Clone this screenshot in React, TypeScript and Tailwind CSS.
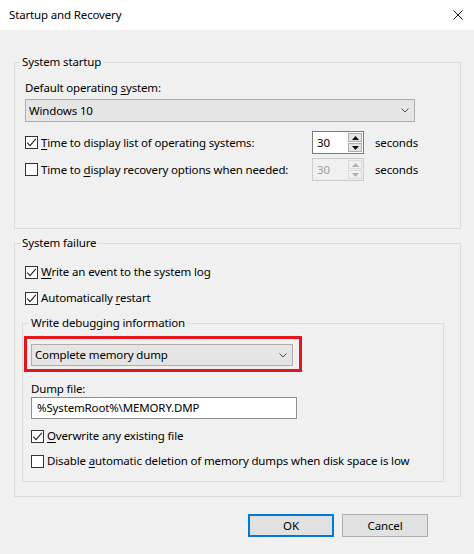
import React from "react";

function Check({ checked }: { checked?: boolean }) {
  return (
    <span className="w-[13px] h-[13px] border border-[#333333] bg-white flex items-center justify-center shrink-0">
      {checked && (
        <svg width="11" height="11" viewBox="0 0 11 11">
          <path d="M1.2 5.6 L4 8.6 L9.8 1.8" fill="none" stroke="#222" strokeWidth="1.1" />
        </svg>
      )}
    </span>
  );
}

function Chevron() {
  return (
    <svg width="8" height="5" viewBox="0 0 8 5" className="shrink-0">
      <path d="M0.5 0.5 L4 4 L7.5 0.5" fill="none" stroke="#505050" strokeWidth="1" />
    </svg>
  );
}

function Spinner({ disabled }: { disabled?: boolean }) {
  const tri = disabled ? "#b0b0b0" : "#111";
  return (
    <div
      className={
        "w-[52px] h-[23px] border flex " +
        (disabled ? "border-[#cccccc] bg-[#f0f0f0]" : "border-[#7a7a7a] bg-white")
      }
    >
      <div className={"flex-1 pl-[4px] flex items-center " + (disabled ? "text-[#a0a0a0]" : "")}>30</div>
      <div className="w-[16px] flex flex-col gap-[1px] p-[1px]">
        <div className={"flex-1 flex items-center justify-center border " + (disabled ? "border-[#dadada] bg-[#f0f0f0]" : "border-[#adadad] bg-[#e5e5e5]")}>
          <svg width="7" height="4" viewBox="0 0 7 4">
            <path d="M0 4 L3.5 0 L7 4 Z" fill={tri} />
          </svg>
        </div>
        <div className={"flex-1 flex items-center justify-center border " + (disabled ? "border-[#dadada] bg-[#f0f0f0]" : "border-[#adadad] bg-[#e5e5e5]")}>
          <svg width="7" height="4" viewBox="0 0 7 4">
            <path d="M0 0 L7 0 L3.5 4 Z" fill={tri} />
          </svg>
        </div>
      </div>
    </div>
  );
}

export default function App() {
  return (
    <div className="w-[474px] h-[554px] bg-[#f0f0f0] flex flex-col text-[11.5px] tracking-[-0.15px] leading-[16px] text-black font-['Noto_Sans',sans-serif] overflow-hidden">
      {/* Title bar */}
      <div className="h-[30px] bg-white flex items-center justify-between pl-[9px] pr-[11px] shrink-0">
        <span>Startup and Recovery</span>
        <svg width="10" height="10" viewBox="0 0 10 10">
          <path d="M0.5 0.5 L9.5 9.5 M9.5 0.5 L0.5 9.5" stroke="#111" strokeWidth="1" />
        </svg>
      </div>

      <div className="flex flex-col pl-[14px]">
        {/* System startup */}
        <div className="mt-[32px] w-[447px] border border-[#dcdcdc] flex flex-col pb-[47px]">
          <div className="-mt-[9px] ml-[5px] px-[2px] w-fit bg-[#f0f0f0]">System startup</div>
          <div className="pl-[10px] flex flex-col">
            <div className="mt-[10px]">
              Default operating <span className="underline underline-offset-2">s</span>ystem:
            </div>
            <div className="mt-[3px] w-[390px] h-[23px] border border-[#adadad] bg-[#e5e5e5] flex items-center justify-between pl-[3px] pr-[5px]">
              <span>Windows 10</span>
              <Chevron />
            </div>
            <div className="mt-[9px] h-[23px] flex items-center">
              <div className="w-[287px] flex items-center gap-[3px]">
                <Check checked />
                <span>
                  <span className="underline underline-offset-2">T</span>ime to display list of operating systems:
                </span>
              </div>
              <Spinner />
              <span className="ml-[11px]">seconds</span>
            </div>
            <div className="mt-[4px] h-[23px] flex items-center">
              <div className="w-[287px] flex items-center gap-[3px]">
                <Check />
                <span>
                  Time to <span className="underline underline-offset-2">d</span>isplay recovery options when needed:
                </span>
              </div>
              <Spinner disabled />
              <span className="ml-[11px]">seconds</span>
            </div>
          </div>
        </div>

        {/* System failure */}
        <div className="mt-[14px] w-[447px] border border-[#dcdcdc] flex flex-col pb-[14px]">
          <div className="-mt-[9px] ml-[5px] px-[2px] w-fit bg-[#f0f0f0]">System failure</div>
          <div className="pl-[10px] flex flex-col">
            <div className="mt-[11px] h-[20px] flex items-center gap-[3px]">
              <Check checked />
              <span>
                <span className="underline underline-offset-2">W</span>rite an event to the system log
              </span>
            </div>
            <div className="mt-[6px] h-[20px] flex items-center gap-[3px]">
              <Check checked />
              <span>
                Automatically <span className="underline underline-offset-2">r</span>estart
              </span>
            </div>
          </div>

          {/* Write debugging information */}
          <div className="mt-[15px] ml-[7px] w-[422px] border border-[#dcdcdc] flex flex-col pb-[10px]">
            <div className="-mt-[9px] ml-[6px] px-[2px] w-fit bg-[#f0f0f0]">Write debugging information</div>
            <div className="mt-[5px] ml-[1px] w-[278px] h-[36px] border-[3px] border-[#e3151f] pl-[4px] pt-[5px]">
              <div className="w-[262px] h-[22px] border border-[#adadad] bg-[#e5e5e5] flex items-center justify-between pl-[3px] pr-[5px]">
                <span>Complete memory dump</span>
                <Chevron />
              </div>
            </div>
            <div className="pl-[8px] flex flex-col">
              <div className="mt-[9px]">Dump file:</div>
              <div className="w-[266px] h-[22px] border border-[#8f8f8f] bg-white flex items-center pl-[5px]">
                %SystemRoot%\MEMORY.DMP
              </div>
              <div className="mt-[7px] h-[20px] flex items-center gap-[3px]">
                <Check checked />
                <span>
                  <span className="underline underline-offset-2">O</span>verwrite any existing file
                </span>
              </div>
              <div className="mt-[5px] h-[20px] flex items-center gap-[3px]">
                <Check />
                <span>
                  Disable <span className="underline underline-offset-2">a</span>utomatic deletion of memory dumps when disk space is low
                </span>
              </div>
            </div>
          </div>
        </div>
      </div>

      {/* Buttons */}
      <div className="mt-[17px] flex justify-end gap-[8px] pr-[46px]">
        <button className="w-[86px] h-[23px] border-2 border-[#0078d7] bg-[#e1e1e1] flex items-center justify-center">
          OK
        </button>
        <button className="w-[86px] h-[23px] border border-[#adadad] bg-[#e1e1e1] flex items-center justify-center">
          Cancel
        </button>
      </div>
    </div>
  );
}
